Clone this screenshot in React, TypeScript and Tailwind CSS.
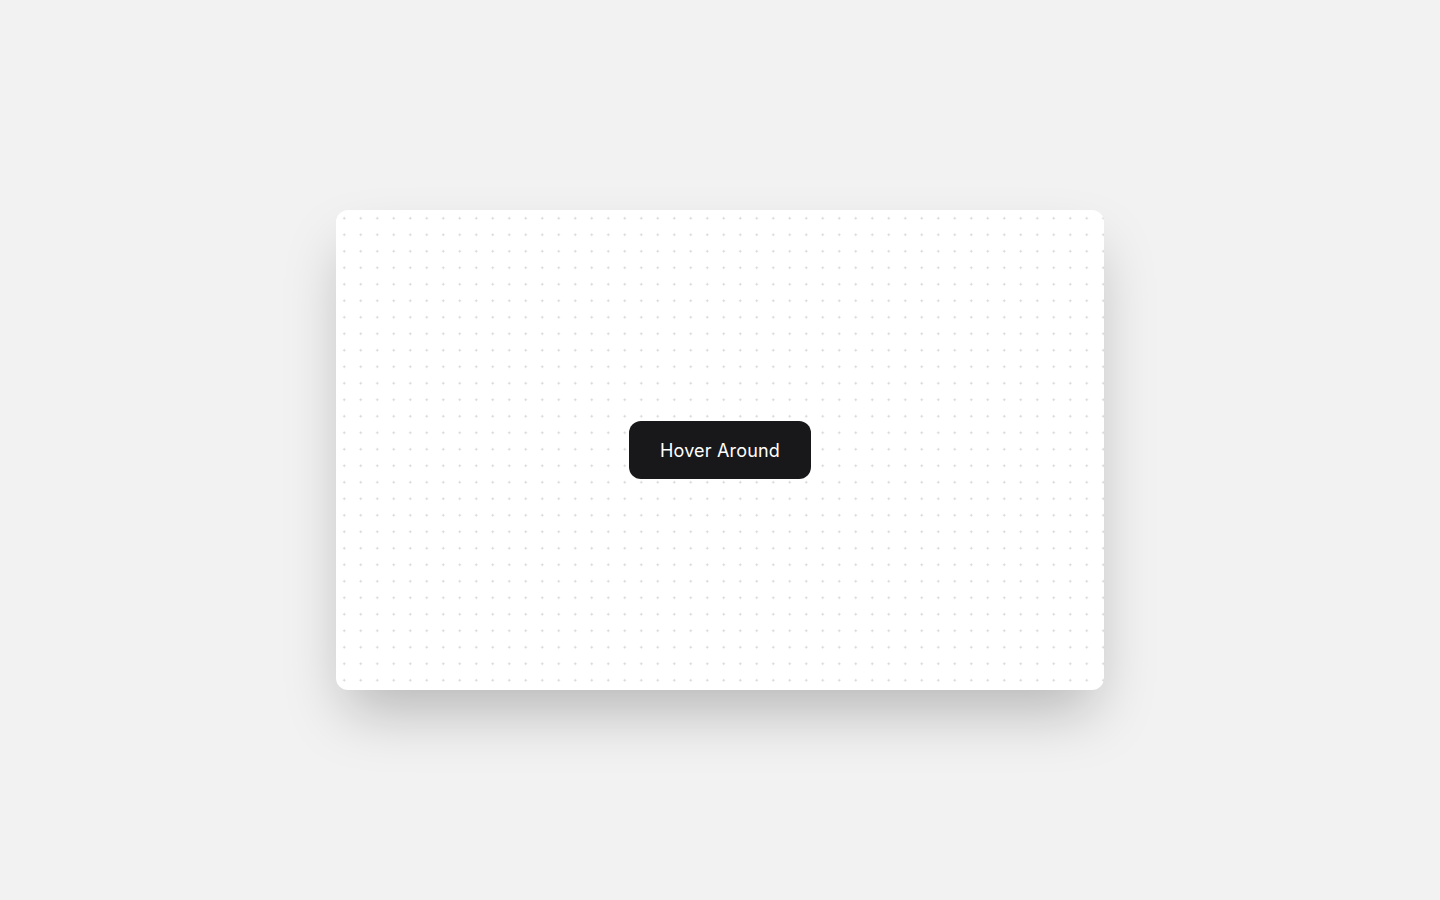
export default function App() {
  return (
    <div className="min-h-screen w-full bg-[#f2f2f2] flex items-center justify-center font-['Inter',sans-serif]">
      <div className="w-[768px] h-[480px] rounded-xl bg-white shadow-[0_30px_60px_-10px_rgba(0,0,0,0.25)] bg-[radial-gradient(circle,#d4d4d4_0.9px,transparent_1.2px)] bg-[length:16.5px_16.5px] flex items-center justify-center">
        <button className="w-[182px] h-[58px] pt-px rounded-xl bg-[#18181b] text-white text-lg tracking-[0.01em]">
          Hover Around
        </button>
      </div>
    </div>
  )
}
